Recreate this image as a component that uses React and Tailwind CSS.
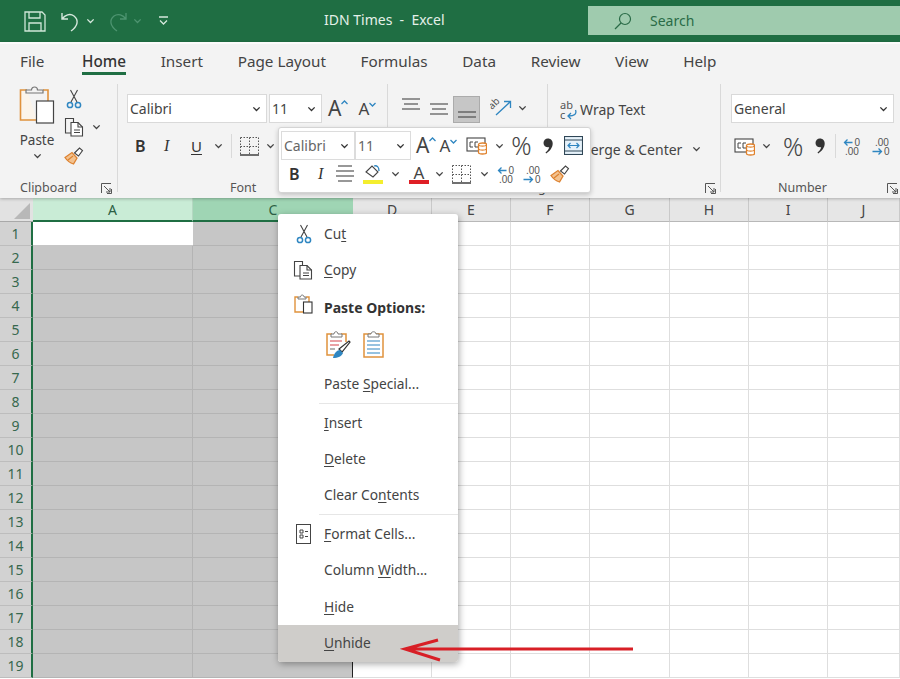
import React from "react";

const rows = Array.from({ length: 19 }, (_, i) => i + 1);
const otherCols = [
  { id: "D", w: "w-[79px]" },
  { id: "E", w: "w-[79px]" },
  { id: "F", w: "w-[79px]" },
  { id: "G", w: "w-[80px]" },
  { id: "H", w: "w-[79px]" },
  { id: "I", w: "w-[79px]" },
  { id: "J", w: "w-[72px]" },
];

function Chev({ className = "", color = "#444" }) {
  return (
    <svg viewBox="0 0 10 6" className={`w-[9px] h-[6px] ${className}`} fill="none" stroke={color} strokeWidth="1.5">
      <path d="M1.5 1.2 5 4.6 8.5 1.2" />
    </svg>
  );
}

function Launcher() {
  return (
    <svg viewBox="0 0 11 11" className="w-[11px] h-[11px]" fill="none" stroke="#555" strokeWidth="1">
      <path d="M.5 10V.5H10M3 3l6 6M9 5v4H5M10.5 6v4.5H6" />
    </svg>
  );
}

function Scissors({ className = "" }) {
  return (
    <svg viewBox="0 0 16 20" className={`w-[16px] h-[20px] ${className}`} fill="none">
      <path d="M11.5 1 5 13M4.5 1 11 13" stroke="#444" strokeWidth="1.1" />
      <circle cx="4" cy="16" r="2.6" stroke="#2f86c1" strokeWidth="1.5" />
      <circle cx="12" cy="16" r="2.6" stroke="#2f86c1" strokeWidth="1.5" />
    </svg>
  );
}

function Copy({ className = "" }) {
  return (
    <svg viewBox="0 0 21 20" className={`w-[21px] h-[20px] ${className}`} fill="none" stroke="#444" strokeWidth="1.1">
      <path d="M7 16H1.500V1.500h8V5" />
      <path d="M7 5.500h7l4.500 4.500v9H7z" fill="#fff" />
      <path d="M14 5.500V10h4.500M10 13h6M10 15.500h6" />
    </svg>
  );
}

function Brush({ className = "" }) {
  return (
    <svg viewBox="0 0 20 18" className={`w-[20px] h-[18px] ${className}`} fill="none">
      <path d="M1 10.500 8 5.500l5 5.500-3.500 6C6 16 3 13.500 1 10.500z" fill="#f3c28f" stroke="#dd8230" strokeWidth="1.3" />
      <path d="M4 13 9 9" stroke="#dd8230" strokeWidth="1.2" />
      <path d="m10.500 6 5-5 3 2.500-4 5.500z" fill="#fff" stroke="#444" strokeWidth="1.1" />
    </svg>
  );
}

function PasteBig() {
  return (
    <svg viewBox="0 0 36 38" className="w-[36px] h-[38px]" fill="none">
      <path d="M8 4H1.500v30H18" stroke="#e0923c" strokeWidth="1.6" fill="#fbf4ea" />
      <path d="M24 4h5v12" stroke="#e0923c" strokeWidth="1.6" />
      <path d="M7 7V4h5.500c0-4 6-4 6 0H24v3z" stroke="#777" strokeWidth="1.2" fill="#f3f3f3" />
      <rect x="17.500" y="15" width="17" height="22" stroke="#444" strokeWidth="1.2" fill="#fff" />
    </svg>
  );
}

function PasteSmall({ className = "" }) {
  return (
    <svg viewBox="0 0 19 20" className={`w-[19px] h-[20px] ${className}`} fill="none">
      <path d="M4 3H1v15h8" stroke="#e0923c" strokeWidth="1.4" />
      <path d="M12 3h3v5" stroke="#e0923c" strokeWidth="1.4" />
      <path d="M4 5V3h2.500c0-2.600 3.500-2.600 3.500 0h2v2z" stroke="#777" strokeWidth="1" fill="#fff" />
      <rect x="9.500" y="8" width="8.500" height="11" stroke="#333" strokeWidth="1.1" fill="#fff" />
    </svg>
  );
}

function Borders({ className = "" }) {
  return (
    <svg viewBox="0 0 19 19" className={`w-[19px] h-[19px] ${className}`} fill="none" stroke="#555" strokeWidth="1">
      <path d="M.5 .5h18M.5 .5v17M18.5 .5v17M9.500 .5v17M.5 9.500h18" strokeDasharray="1.500 1.500" />
      <path d="M0 18h19" strokeWidth="1.4" stroke="#333" />
    </svg>
  );
}

function Lines({ className = "", y = [1, 6, 11, 16], lens = [14, 18, 18, 14] }) {
  return (
    <svg viewBox="0 0 18 18" className={`w-[18px] h-[18px] ${className}`} fill="none" stroke="#444" strokeWidth="1.1">
      {y.map((v, i) => (
        <path key={v} d={`M${(18 - lens[i]) / 2} ${v}h${lens[i]}`} />
      ))}
    </svg>
  );
}

function Accounting({ className = "" }) {
  return (
    <svg viewBox="0 0 21 19" className={`w-[21px] h-[19px] ${className}`} fill="none">
      <rect x="1" y="2" width="18" height="13" stroke="#444" strokeWidth="1.1" fill="#fff" />
      <path d="M4 6h3M4 6v5h3M9 6h3M9 6v5h3" stroke="#444" strokeWidth="1" />
      <path d="M12.500 8.500c0-2 8-2 8 0v8c0 2-8 2-8 0z" fill="#fff" stroke="#e0812b" strokeWidth="1.3" />
      <path d="M12.500 9c1 1.600 7 1.600 8 0M12.500 13c1 1.600 7 1.600 8 0" stroke="#e0812b" strokeWidth="1.2" />
    </svg>
  );
}

function CommaIcon({ className = "" }) {
  return (
    <svg viewBox="0 0 10 16" className={`w-[10px] h-[16px] ${className}`}>
      <path d="M4.800 .5C8 .5 9.700 2.700 9.700 5.400c0 4-3 7.700-6.500 10l-.7-.8c2-1.800 3.400-3.600 3.700-5.400C3.300 9.800.5 8 .5 5c0-2.500 2-4.500 4.300-4.500z" fill="#333" />
    </svg>
  );
}

function DecInc({ className = "" }) {
  return (
    <svg viewBox="0 0 20 19" className={`w-[20px] h-[19px] ${className}`}>
      <path d="M9.500 5.500H1.500M4.500 2.500l-3 3 3 3" fill="none" stroke="#2f86c1" strokeWidth="1.300" />
      <text x="11.500" y="8.500" fontSize="10" fontFamily="Liberation Sans, sans-serif" fill="#555">0</text>
      <text x="2" y="18" fontSize="10" fontFamily="Liberation Sans, sans-serif" fill="#555">.00</text>
    </svg>
  );
}

function DecDec({ className = "" }) {
  return (
    <svg viewBox="0 0 20 19" className={`w-[20px] h-[19px] ${className}`}>
      <text x="3" y="8.500" fontSize="10" fontFamily="Liberation Sans, sans-serif" fill="#555">.00</text>
      <path d="M.5 14.500h9M6.500 11.500l3 3-3 3" fill="none" stroke="#2f86c1" strokeWidth="1.300" />
      <text x="12" y="18" fontSize="10" fontFamily="Liberation Sans, sans-serif" fill="#555">0</text>
    </svg>
  );
}

function GrowA({ down = false, small = false, className = "" }) {
  return (
    <div className={`flex items-start leading-none text-[#444] ${className}`}>
      <span className={small ? "text-[17px]" : "text-[21px]"}>A</span>
      <svg viewBox="0 0 7 5" className="w-[7px] h-[5px] mt-[2px]" fill="none" stroke="#2f86c1" strokeWidth="1.300">
        <path d={down ? "M.5 1 3.500 4 6.500 1" : "M.5 4 3.500 1 6.500 4"} />
      </svg>
    </div>
  );
}

function Combo({ label, w, h = "h-[29px]", border = "border-[#d9d9d9]", text = "text-[#444]" }) {
  return (
    <div className={`${w} ${h} ${border} ${text} border bg-white flex items-center justify-between pl-[2px] pr-[5px] text-[14px]`}>
      <span>{label}</span>
      <Chev color="#333" />
    </div>
  );
}

function FillColor({ className = "" }) {
  return (
    <div className={`flex flex-col items-center w-[20px] ${className}`}>
      <svg viewBox="0 0 18 14" className="w-[18px] h-[14px]" fill="none">
        <path d="m2 7 6-6 6 6-5 5z" stroke="#444" strokeWidth="1.100" fill="#fff" />
        <path d="M10 1c3-1 5 1 5 5" stroke="#2f86c1" strokeWidth="1.300" />
      </svg>
      <div className="w-[20px] h-[4px] bg-[#f4ee2e] mt-[1px]" />
    </div>
  );
}

function FontColor({ className = "" }) {
  return (
    <div className={`flex flex-col items-center w-[20px] leading-none ${className}`}>
      <span className="text-[17px] text-[#444] h-[15px] leading-[15px]">A</span>
      <div className="w-[20px] h-[4px] bg-[#df1f26]" />
    </div>
  );
}

function Item({ children, icon, hover = false, h = "h-[36px]" }) {
  return (
    <div className={`${h} flex items-center text-[13.75px] text-[#444] ${hover ? "bg-[#cfcdca]" : ""}`}>
      <div className="w-[46px] flex justify-center pl-[5px]">{icon}</div>
      <div>{children}</div>
    </div>
  );
}

function Key({ children }) {
  return <span className="underline underline-offset-2">{children}</span>;
}

function MenuLine() {
  return <div className="ml-[41px] my-[1px] h-[1px] bg-[#e6e6e6]" />;
}

export default function App() {
  return (
    <div className="relative w-[900px] h-[679px] overflow-hidden bg-white font-['Noto_Sans','Open_Sans',sans-serif]">
      {/* title bar */}
      <div className="h-[42px] bg-[#1f6e43] flex items-center text-[#d6e8dd]">
        <svg viewBox="0 0 22 21" className="w-[22px] h-[21px] ml-[24px]" fill="none" stroke="#cfe6d8" strokeWidth="1.300">
          <path d="M1 1h17l3 3v16H1z" />
          <path d="M5 1v6h11V1M5 20v-8h12v8" />
        </svg>
        <svg viewBox="0 0 19 21" className="w-[19px] h-[21px] ml-[15px]" fill="none" stroke="#d6e8dd" strokeWidth="1.400">
          <path d="M1 2v6h6M1 8c3-4 8-6 12-3 5 4 4 10-3 15" />
        </svg>
        <Chev className="ml-[6px]" color="#d6e8dd" />
        <svg viewBox="0 0 19 21" className="w-[19px] h-[21px] ml-[13px]" fill="none" stroke="#4d9470" strokeWidth="1.300">
          <path d="M18 2v6h-6M18 8c-3-4-8-6-12-3-5 4-4 10 3 15" />
        </svg>
        <Chev className="ml-[6px]" color="#4d9470" />
        <svg viewBox="0 0 11 10" className="w-[11px] h-[10px] ml-[16px]" fill="none" stroke="#d6e8dd" strokeWidth="1.300">
          <path d="M1 1h9M2 4.500 5.500 8 9 4.500" />
        </svg>
        <div className="ml-[155px] w-[124px] -mt-[4px] text-[14px] whitespace-pre text-[#e4f0e9]">IDN Times  -  Excel</div>
        <div className="ml-[140px] flex-1 h-[29px] -mt-[1px] bg-[#9fcbae] flex items-center text-[#2a6b47]">
          <svg viewBox="0 0 18 18" className="w-[18px] h-[18px] ml-[26px]" fill="none" stroke="#2a6b47" strokeWidth="1.200">
            <circle cx="11" cy="7" r="5.500" />
            <path d="M7 11 1 17" />
          </svg>
          <span className="ml-[18px] text-[14px]">Search</span>
        </div>
      </div>

      {/* ribbon */}
      <div className="h-[156px] border-t-2 border-[#fbfbfb] bg-[#f3f3f3] shadow-[0_1px_3px_rgba(0,0,0,0.25)] relative">
        <div className="flex h-[34px] items-center pl-[20px] gap-[34.7px] text-[15.25px] text-[#444]">
          <span>File</span>
          <span className="relative font-medium text-[#333] ml-[3px]">
            Home
            <span className="absolute left-0 right-0 -bottom-[3px] h-[3px] bg-[#1f6e43]" />
          </span>
          <span>Insert</span>
          <span>Page Layout</span>
          <span>Formulas</span>
          <span>Data</span>
          <span>Review</span>
          <span>View</span>
          <span>Help</span>
        </div>

        <div className="flex h-[115px] pt-[6px]">
          {/* clipboard */}
          <div className="w-[118px] h-[108px] border-r border-[#d9d9d9] flex flex-col">
            <div className="flex h-[88px] pt-[2px]">
              <div className="ml-[19px] w-[36px] flex flex-col items-center">
                <PasteBig />
                <span className="text-[13.5px] text-[#444] mt-[6px] leading-[20px]">Paste</span>
                <Chev className="mt-[3px]" />
              </div>
              <div className="ml-[9px] flex flex-col items-start">
                <Scissors className="ml-[2px] mt-[3px]" />
                <div className="flex items-center mt-[8px]">
                  <Copy />
                  <Chev className="ml-[7px]" />
                </div>
                <Brush className="mt-[10px]" />
              </div>
            </div>
            <div className="mt-auto mb-[-6px] flex items-center justify-between pl-[20px] pr-[5px] text-[12.5px] text-[#555]">
              <span>Clipboard</span>
              <Launcher />
            </div>
          </div>

          {/* font */}
          <div className="w-[270px] h-[108px] border-r border-[#d9d9d9] flex flex-col">
            <div className="flex items-center pl-[9px] mt-[10px]">
              <Combo label="Calibri" w="w-[140px]" />
              <Combo label="11" w="w-[53px]" border="border-[#d9d9d9] ml-[2px]" />
              <GrowA className="ml-[6px]" />
              <GrowA small down className="ml-[10px]" />
            </div>
            <div className="flex items-center pl-[17px] mt-[11px] h-[24px] text-[#333]">
              <span className="w-[12px] text-[16px] font-semibold leading-none">B</span>
              <span className="ml-[17px] w-[10px] text-[16px] italic font-['Liberation_Serif',serif] leading-none">I</span>
              <span className="ml-[17px] text-[15px] underline underline-offset-2 leading-none">U</span>
              <Chev className="ml-[12px]" />
              <div className="ml-[8px] w-[1px] h-[24px] bg-[#d9d9d9]" />
              <Borders className="ml-[8px]" />
              <Chev className="ml-[7px]" />
            </div>
            <div className="mt-auto mb-[-6px] pl-[112px] text-[12.5px] text-[#555]">Font</div>
          </div>

          {/* alignment */}
          <div className="w-[333px] h-[108px] border-r border-[#d9d9d9] flex flex-col">
            <div className="flex flex-1">
              <div className="w-[160px] border-r border-[#d9d9d9] flex items-start pt-[13px] pl-[14px]">
                <Lines className="mt-[1px]" lens={[18, 14, 18, 0]} />
                <Lines className="ml-[10px] mt-[1px]" lens={[0, 18, 14, 18]} />
                <div className="ml-[5px] -mt-[1px] w-[27px] h-[27px] bg-[#c6c6c6] border border-[#ababab] flex items-center justify-center">
                  <Lines lens={[0, 0, 18, 18]} />
                </div>
                <svg viewBox="0 0 22 20" className="w-[22px] h-[20px] ml-[10px]" fill="none">
                  <path d="M6 18 20 5M14 4.500h6.500V11" stroke="#2f86c1" strokeWidth="1.300" />
                  <text x="2" y="13" fontSize="10" fontFamily="Noto Sans, sans-serif" fill="#555" transform="rotate(-45 2 13)">ab</text>
                </svg>
                <Chev className="ml-[6px] mt-[8px]" />
              </div>
              <div className="flex-1 pl-[12px] pt-[11px] text-[14px] text-[#444]">
                <div className="flex items-center h-[29px]">
                  <svg viewBox="0 0 17 20" className="w-[17px] h-[20px]">
                    <text x="0" y="9" fontSize="11" fontFamily="Noto Sans, sans-serif" fill="#555">ab</text>
                    <text x="0" y="19" fontSize="11" fontFamily="Noto Sans, sans-serif" fill="#555">c</text>
                    <path d="M15.500 10c1.500 4-1 6-7 6M11 13l-3 3 3 3" fill="none" stroke="#2f86c1" strokeWidth="1.300" />
                  </svg>
                  <span className="ml-[3px]">Wrap Text</span>
                </div>
                <div className="flex items-center mt-[13px] h-[24px] pl-[18px]">
                  <span>Merge &amp; Center</span>
                  <Chev className="ml-[10px]" />
                </div>
              </div>
            </div>
            <div className="relative flex justify-center items-center text-[12.5px] text-[#555] mb-[-6px]">
              <span>Alignment</span>
              <div className="absolute right-[4px] top-[4px]">
                <Launcher />
              </div>
            </div>
          </div>

          {/* number */}
          <div className="w-[179px] h-[108px] flex flex-col">
            <div className="ml-[10px] mt-[10px]">
              <Combo label="General" w="w-[163px]" />
            </div>
            <div className="flex items-center pl-[13px] mt-[11px] h-[24px]">
              <Accounting />
              <Chev className="ml-[7px]" />
              <span className="ml-[12px] text-[25px] leading-none font-light text-[#444]">%</span>
              <CommaIcon className="ml-[12px]" />
              <div className="ml-[10px] w-[1px] h-[24px] bg-[#d9d9d9]" />
              <DecInc className="ml-[7px]" />
              <DecDec className="ml-[9px]" />
            </div>
            <div className="mt-auto mb-[-6px] flex items-center pl-[57px] pr-[2px] justify-between text-[12.5px] text-[#555]">
              <span>Number</span>
              <Launcher />
            </div>
          </div>
        </div>
      </div>

      {/* sheet */}
      <div className="flex h-[24px] bg-[#e6e6e6] text-[14px] text-[#444]">
        <div className="w-[33px] border-b border-[#a9a9a9] bg-[#e2e2e2] flex items-end justify-end pr-[3px] pb-[2px]">
          <div className="w-0 h-0 border-l-[16px] border-l-transparent border-b-[16px] border-b-[#b8b8b8]" />
        </div>
        <div className="w-[160px] bg-[#c9ecd6] border-b-2 border-[#1f6e43] border-r border-r-[#b5d8c2] flex items-center justify-center text-[#2c5f44]">A</div>
        <div className="w-[160px] bg-[#9fd5b4] border-b-2 border-[#1f6e43] flex items-center justify-center text-[#2c5f44]">C</div>
        {otherCols.map((c) => (
          <div key={c.id} className={`${c.w} border-b border-[#b8b8b8] border-r border-r-[#c9c9c9] flex items-center justify-center`}>
            {c.id}
          </div>
        ))}
      </div>
      {rows.map((r) => (
        <div key={r} className="flex h-[24px]">
          <div className="w-[33px] bg-[#d2d2d2] border-b border-[#bdbdbd] border-r-2 border-r-[#1f6e43] flex items-center justify-center text-[14px] text-[#37684e]">
            {r}
          </div>
          <div className={`w-[160px] border-b ${r === 1 ? "bg-white border-[#c6c6c6]" : "bg-[#c6c6c6] border-[#b4b4b4] border-r border-r-[#b4b4b4]"}`} />
          <div className="w-[160px] bg-[#c6c6c6] border-b border-[#b4b4b4] border-r border-r-[#222]" />
          {otherCols.map((c) => (
            <div key={c.id} className={`${c.w} border-b border-r border-[#dedede]`} />
          ))}
        </div>
      ))}

      {/* mini toolbar */}
      <div className="absolute left-[278px] top-[127px] w-[313px] h-[66px] bg-white rounded-[3px] border border-[#d4d4d4] shadow-[0_2px_5px_rgba(0,0,0,0.2)] pt-[3px]">
        <div className="flex items-center pl-[2px] h-[29px]">
          <Combo label="Calibri" w="w-[74px]" border="border-[#dcdcdc]" text="text-[#666]" />
          <Combo label="11" w="w-[56px]" border="border-[#dcdcdc]" text="text-[#666]" />
          <GrowA className="ml-[5px]" />
          <GrowA small down className="ml-[3px]" />
          <Accounting className="ml-[9px]" />
          <Chev className="ml-[8px]" />
          <span className="ml-[7px] text-[25px] leading-none font-light text-[#444]">%</span>
          <CommaIcon className="ml-[11px]" />
          <svg viewBox="0 0 19 19" className="w-[19px] h-[19px] ml-[11px]" fill="none">
            <rect x=".5" y=".5" width="18" height="18" stroke="#2f4656" strokeWidth="1.100" fill="#e6f2fa" />
            <path d="M.5 4h18M.5 15h18" stroke="#2f4656" strokeWidth="1" />
            <path d="M4 9.500h11M6.500 7l-2.500 2.500L6.500 12M12.500 7l2.500 2.500-2.500 2.500" stroke="#2f86c1" strokeWidth="1.200" />
          </svg>
        </div>
        <div className="flex items-center pl-[10px] mt-[1px] h-[26px] text-[#333]">
          <span className="w-[12px] text-[16px] font-semibold leading-none">B</span>
          <span className="ml-[17px] w-[10px] text-[16px] italic font-['Liberation_Serif',serif] leading-none">I</span>
          <Lines className="ml-[8px]" />
          <FillColor className="ml-[9px]" />
          <Chev className="ml-[8px]" />
          <FontColor className="ml-[9px]" />
          <Chev className="ml-[6px]" />
          <Borders className="ml-[8px]" />
          <Chev className="ml-[9px]" />
          <DecInc className="ml-[8px]" />
          <DecDec className="ml-[6px]" />
          <Brush className="ml-[7px]" />
        </div>
      </div>

      {/* context menu */}
      <div className="absolute left-[278px] top-[214px] w-[180px] h-[448px] bg-white rounded-[3px] overflow-hidden shadow-[1px_2px_7px_rgba(0,0,0,0.35)] pt-[2px]">
        <Item icon={<Scissors />}>
          Cu<Key>t</Key>
        </Item>
        <Item icon={<Copy />}>
          <Key>C</Key>opy
        </Item>
        <div className="h-[37px] pt-[1px] flex items-center">
          <div className="w-[46px] flex justify-center pl-[5px]">
            <PasteSmall className="-mt-[6px]" />
          </div>
          <span className="text-[14px] font-bold text-[#333]">Paste Options:</span>
        </div>
        <div className="h-[38px] flex items-center pl-[48px]">
          <svg viewBox="0 0 25 29" className="w-[25px] h-[29px]" fill="none">
            <path d="M6 4H1v21h7M15 4h5v8" stroke="#e0923c" strokeWidth="1.500" />
            <path d="M5 7V4h3c0-3 4-3 4 0h4v3z" stroke="#777" fill="#fff" />
            <path d="M4 11h12M4 15h9" stroke="#d6434b" strokeWidth="1.100" />
            <path d="M4 19h5" stroke="#777" strokeWidth="1.100" />
            <path d="m13 19 10-8 1 1-8 10z" fill="#fff" stroke="#333" strokeWidth="1.200" />
            <path d="M7 28c1-5 4-8 7-8l3 3c-1 3-5 5-10 5z" fill="#2f86c1" />
          </svg>
          <svg viewBox="0 0 21 28" className="w-[21px] h-[28px] ml-[12px]" fill="none">
            <rect x="1" y="4" width="19" height="23" stroke="#e0923c" strokeWidth="1.500" />
            <path d="M5 7V4h3c0-3 5-3 5 0h3v3z" stroke="#777" fill="#fff" />
            <path d="M4 11h13M4 15h13M4 19h13M4 23h13" stroke="#2f86c1" strokeWidth="1.100" />
          </svg>
        </div>
        <div className="mt-[3px]">
          <Item>
            Paste <Key>S</Key>pecial...
          </Item>
        </div>
        <MenuLine />
        <Item>
          <Key>I</Key>nsert
        </Item>
        <Item>
          <Key>D</Key>elete
        </Item>
        <Item>
          Clear Co<Key>n</Key>tents
        </Item>
        <MenuLine />
        <Item
          icon={
            <svg viewBox="0 0 15 20" className="w-[15px] h-[20px]" fill="none" stroke="#444" strokeWidth="1">
              <rect x=".5" y=".5" width="14" height="19" />
              <path d="M4 6h3v3H4zM4 11h3v3H4zM9 7.500h3M9 12.500h3" />
            </svg>
          }
        >
          <Key>F</Key>ormat Cells...
        </Item>
        <Item>
          Column <Key>W</Key>idth...
        </Item>
        <div className="mt-[2px]">
          <Item h="h-[35px]">
            <Key>H</Key>ide
          </Item>
        </div>
        <Item hover h="h-[37px]">
          <Key>U</Key>nhide
        </Item>
      </div>

      {/* red arrow */}
      <svg viewBox="0 0 240 26" className="absolute left-[400px] top-[637px] w-[240px] h-[26px]" fill="none" stroke="#d81f26" strokeWidth="3">
        <path d="M5 12h228M38 3 5 12l35 11" />
      </svg>
    </div>
  );
}
